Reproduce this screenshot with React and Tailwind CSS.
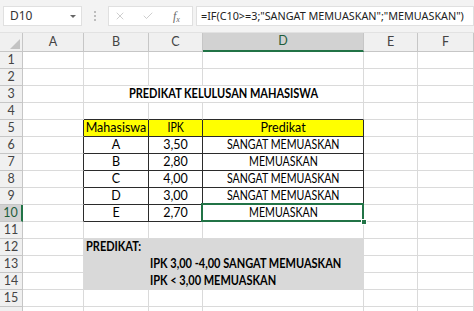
import React from "react";
import { X, Check } from "lucide-react";

const GRID = "border-[#dadada]";
const DARK = "border-[#2b2b2b]";
const FILL = "border-[#d9d9d9] bg-[#d9d9d9]";
const font = { fontFamily: "Lato, 'Liberation Sans', sans-serif" };

const cols = ["A", "B", "C", "D", "E", "F"];

const data = [
  ["A", "3,50", "SANGAT MEMUASKAN"],
  ["B", "2,80", "MEMUASKAN"],
  ["C", "4,00", "SANGAT MEMUASKAN"],
  ["D", "3,00", "SANGAT MEMUASKAN"],
  ["E", "2,70", "MEMUASKAN"],
];

// Calibri caps are narrow, squeeze Lato to match
function Caps({ left, bold, children }) {
  return (
    <span
      className={`inline-block ${bold ? "scale-x-[0.88]" : "scale-x-[0.85]"} ${
        left ? "origin-left" : "origin-center"
      }`}
    >
      {children}
    </span>
  );
}

function Cell({ className = "", children }) {
  return (
    <div className={`h-[17px] border-r border-b flex items-center overflow-visible whitespace-nowrap ${className}`}>
      {children}
    </div>
  );
}

function RowHead({ n, active, blank }) {
  return (
    <div
      className={`h-[17px] border-b flex items-center justify-center text-[12.5px] ${
        active
          ? "bg-[#d2d2d2] border-r-2 border-r-[#217346] border-b-[#c6c6c6] text-[#1e5d3b]"
          : "bg-[#f0f0f0] border-r border-[#c6c6c6] text-[#444]"
      }`}
    >
      {blank ? "" : n}
    </div>
  );
}

function Row({ n, blank, children }) {
  return (
    <>
      <RowHead n={n} active={n === 10} blank={blank} />
      {children}
    </>
  );
}

function EmptyRow({ n, blank }) {
  return (
    <Row n={n} blank={blank}>
      {cols.map((c) => (
        <Cell key={c} className={GRID} />
      ))}
    </Row>
  );
}

export default function App() {
  return (
    <div className="w-[474px] h-[311px] overflow-hidden bg-white text-black" style={font}>
      {/* formula bar */}
      <div className="h-[33px] bg-[#f3f3f3] flex items-center pl-[3px] border-b border-[#e2e2e2]">
        <div className="shrink-0 w-[79px] h-[20px] bg-white border border-[#e0e0e0] flex items-center justify-between pl-[6px] pr-[5px]">
          <span className="text-[12px] text-[#333]" style={{ fontFamily: "'Noto Sans', sans-serif" }}>D10</span>
          <span className="w-0 h-0 border-l-[3px] border-r-[3px] border-t-[3px] border-l-transparent border-r-transparent border-t-[#666]" />
        </div>
        <div className="shrink-0 w-[26px] flex flex-col items-center gap-[2px]">
          <span className="w-[2px] h-[2px] bg-[#bdbdbd]" />
          <span className="w-[2px] h-[2px] bg-[#bdbdbd]" />
          <span className="w-[2px] h-[2px] bg-[#bdbdbd]" />
        </div>
        <div className="shrink-0 w-[85px] h-[20px] bg-white border border-[#e0e0e0] flex items-center pl-[5px] text-[#b9b9b9]">
          <X size={12} strokeWidth={1.4} />
          <Check size={12} strokeWidth={1.4} className="ml-[16px]" />
          <span className="ml-[19px] text-[12px] italic text-[#6a6a6a]" style={{ fontFamily: "'Liberation Serif', serif" }}>
            f<sub className="text-[8px]">x</sub>
          </span>
        </div>
        <div className="ml-[3px] flex-1 min-w-0 overflow-hidden h-[20px] bg-white border border-[#e0e0e0] flex items-center pl-[4px]">
          <span className="text-[10.8px] text-[#222] whitespace-nowrap" style={{ fontFamily: "'Noto Sans', sans-serif" }}>
            =IF(C10&gt;=3;"SANGAT MEMUASKAN";"MEMUASKAN")
          </span>
        </div>
      </div>

      {/* sheet */}
      <div className="grid grid-cols-[23px_61px_65px_54px_161px_54px_1fr] text-[12.5px]">
        {/* column headers */}
        <div className="h-[19px] bg-[#f0f0f0] border-r border-b border-[#c6c6c6] relative">
          <svg className="absolute right-[2px] bottom-[2px]" width="10" height="10" viewBox="0 0 10 10">
            <polygon points="10,0 10,10 0,10" fill="#c3c3c3" />
          </svg>
        </div>
        {cols.map((c) =>
          c === "D" ? (
            <div key={c} className="h-[19px] bg-[#d2d2d2] border-r border-[#c6c6c6] border-b-2 border-b-[#217346] flex items-center justify-center text-[#1e5d3b]">
              {c}
            </div>
          ) : (
            <div key={c} className="h-[19px] bg-[#f0f0f0] border-r border-b border-[#c6c6c6] flex items-center justify-center text-[#444]">
              {c}
            </div>
          )
        )}

        <EmptyRow n={1} />
        <EmptyRow n={2} />

        <Row n={3}>
          <Cell className={GRID} />
          <Cell className={`${GRID} col-span-3 justify-center font-bold`}>
            <Caps bold>PREDIKAT KELULUSAN MAHASISWA</Caps>
          </Cell>
          <Cell className={GRID} />
          <Cell className={GRID} />
        </Row>

        <Row n={4}>
          <Cell className={GRID} />
          <Cell className="border-r-[#dadada] border-b-[#2b2b2b]" />
          <Cell className="border-r-[#dadada] border-b-[#2b2b2b]" />
          <Cell className="border-r-[#dadada] border-b-[#2b2b2b]" />
          <Cell className={GRID} />
          <Cell className={GRID} />
        </Row>

        <Row n={5}>
          <Cell className="border-r-[#2b2b2b] border-b-[#dadada]" />
          <Cell className={`${DARK} bg-[#ffff00] justify-center`}>Mahasiswa</Cell>
          <Cell className={`${DARK} bg-[#ffff00] justify-center`}><Caps>IPK</Caps></Cell>
          <Cell className={`${DARK} bg-[#ffff00] justify-center`}>Predikat</Cell>
          <Cell className={GRID} />
          <Cell className={GRID} />
        </Row>

        {data.map(([m, ipk, p], i) => (
          <Row key={m} n={6 + i}>
            <Cell className="border-r-[#2b2b2b] border-b-[#dadada]" />
            <Cell className={`${DARK} justify-center`}>{m}</Cell>
            <Cell className={`${DARK} justify-center`}>{ipk}</Cell>
            <Cell className={`${DARK} justify-center relative`}>
              <Caps>{p}</Caps>
              {i === 4 && (
                <>
                  <span className="absolute left-[-2px] top-[-2px] right-[-1px] bottom-[-1px] border-2 border-[#217346]" />
                  <span className="absolute right-[-4px] bottom-[-4px] w-[6px] h-[6px] bg-[#217346] border border-white" />
                </>
              )}
            </Cell>
            <Cell className={GRID} />
            <Cell className={GRID} />
          </Row>
        ))}

        <EmptyRow n={11} />

        <Row n={12}>
          <Cell className={GRID} />
          <Cell className={`${FILL} font-bold pl-[2px]`}>
            <Caps left bold>PREDIKAT:</Caps>
          </Cell>
          <Cell className={FILL} />
          <Cell className={FILL} />
          <Cell className={GRID} />
          <Cell className={GRID} />
        </Row>

        <Row n={13}>
          <Cell className={GRID} />
          <Cell className={FILL} />
          <Cell className={`col-span-2 ${FILL} font-bold pl-[1px]`}>
            <Caps left bold>IPK 3,00 -4,00 SANGAT MEMUASKAN</Caps>
          </Cell>
          <Cell className={GRID} />
          <Cell className={GRID} />
        </Row>

        <Row n={14}>
          <Cell className={GRID} />
          <Cell className={FILL} />
          <Cell className={`col-span-2 ${FILL} font-bold pl-[1px]`}>
            <Caps left bold>IPK &lt; 3,00 MEMUASKAN</Caps>
          </Cell>
          <Cell className={GRID} />
          <Cell className={GRID} />
        </Row>

        <EmptyRow n={15} />
        <EmptyRow n={16} blank />
      </div>
    </div>
  );
}
